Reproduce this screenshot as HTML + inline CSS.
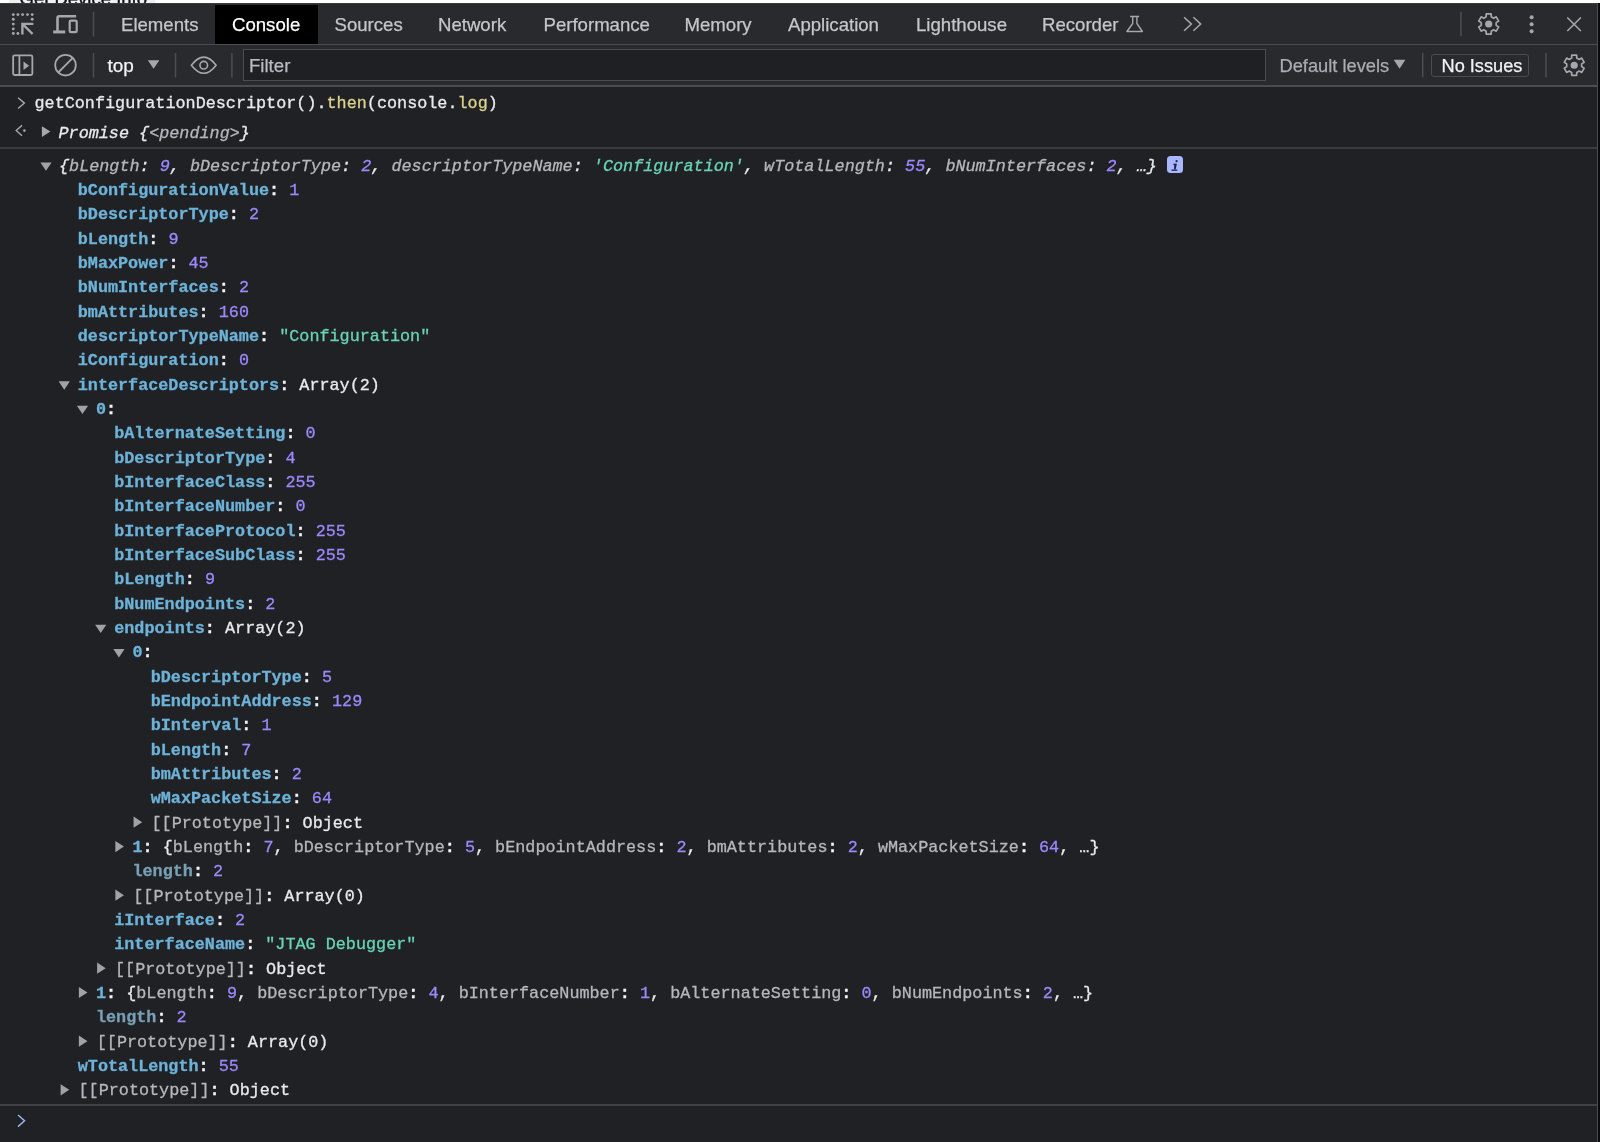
<!DOCTYPE html>
<html><head><meta charset="utf-8"><style>
html,body{margin:0;padding:0;}
body{width:1600px;height:1142px;position:relative;overflow:hidden;background:#202124;font-family:"Liberation Sans",sans-serif;}
.abs{position:absolute;}
.row{position:absolute;white-space:pre;font-family:"Liberation Mono",monospace;font-size:16.8px;line-height:20.16px;height:20.16px;-webkit-text-stroke:0.3px currentColor;}
.n{color:#6db2d8;font-weight:bold;}
.nd{color:#789fb5;font-weight:bold;}
.p{color:#e8eaed;}
.pc{color:#f4f5f6;font-weight:bold;}
.num{color:#9c88ff;}
.str{color:#68d3b7;}
.o{color:#e8eaed;}
.g{color:#b4b7bb;}
.pi{color:#e8eaed;font-style:italic;}
.gi{color:#b4b7bb;font-style:italic;}
.numi{color:#9c88ff;font-style:italic;}
.stri{color:#68d3b7;font-style:italic;}
.td{position:absolute;width:0;height:0;border-left:5.6px solid transparent;border-right:5.6px solid transparent;border-top:8.4px solid #a0a3a6;}
.tr{position:absolute;width:0;height:0;border-top:5.6px solid transparent;border-bottom:5.6px solid transparent;border-left:8.6px solid #a0a3a6;}
.tab{position:absolute;top:0;font-size:18.6px;line-height:20px;color:#c4c7ca;white-space:pre;-webkit-text-stroke:0.25px currentColor;}
</style></head><body>
<div style="position:absolute;left:0;top:0;width:1600px;height:1142px;will-change:transform">
<!-- top white strip -->
<div class="abs" style="left:0;top:0;width:1600px;height:3px;background:#fff;overflow:hidden">
  <div class="abs" style="left:9px;top:0;width:146px;height:3px;background:#efefef"></div>
  <div class="abs" style="left:19.5px;top:-9.3px;font-size:18.5px;line-height:15px;color:#111;white-space:pre;-webkit-text-stroke:0.4px #111">Get Device Info</div>
</div>
<div class="abs" style="left:0;top:3px;width:1600px;height:1.2px;background:#3a3b3e"></div>
<div class="abs" style="left:0;top:4px;width:1600px;height:40px;background:#292a2d"></div>
<div class="abs" style="left:215px;top:4.5px;width:103px;height:39px;background:#000"></div>
<div class="abs" style="left:0;top:43.8px;width:1600px;height:1.6px;background:#4a4c50"></div>
<div class="abs" style="left:0;top:45.4px;width:1600px;height:40px;background:#292a2d"></div>
<div class="abs" style="left:0;top:85px;width:1600px;height:1.6px;background:#4a4c50"></div>
<div class="abs" style="left:0;top:147.3px;width:1600px;height:1.5px;background:#3a3c40"></div>
<div class="abs" style="left:0;top:1104px;width:1600px;height:1.6px;background:#404145"></div>
<div class="abs" style="left:1596.8px;top:3px;width:1.5px;height:1139px;background:#4a4c50"></div>
<div class="abs" style="left:1598.3px;top:3px;width:1.7px;height:1139px;background:#0a0a0c"></div>
<!-- tabs -->
<div class="tab" style="left:121px;top:14.6px">Elements</div>
<div class="tab" style="left:232px;top:14.6px;color:#fff">Console</div>
<div class="tab" style="left:334.5px;top:14.6px">Sources</div>
<div class="tab" style="left:438px;top:14.6px">Network</div>
<div class="tab" style="left:543.5px;top:14.6px">Performance</div>
<div class="tab" style="left:684.5px;top:14.6px">Memory</div>
<div class="tab" style="left:788px;top:14.6px">Application</div>
<div class="tab" style="left:916px;top:14.6px">Lighthouse</div>
<div class="tab" style="left:1042px;top:14.6px">Recorder</div>
<svg class="abs" style="left:0;top:0" width="1600" height="90" viewBox="0 0 1600 90" fill="none" stroke="#a4a7ab">
  <!-- inspect -->
  <g fill="#a4a7ab" stroke="none">
<circle cx="13.3" cy="14.6" r="1.45"/><circle cx="17.9" cy="14.6" r="1.45"/><circle cx="22.6" cy="14.6" r="1.45"/><circle cx="27.5" cy="14.6" r="1.45"/><circle cx="32.2" cy="14.6" r="1.45"/><circle cx="13.3" cy="19.3" r="1.45"/><circle cx="13.3" cy="24.1" r="1.45"/><circle cx="13.3" cy="28.9" r="1.45"/><circle cx="13.3" cy="33.5" r="1.45"/><circle cx="17.9" cy="33.5" r="1.45"/><circle cx="32.2" cy="19.3" r="1.45"/>
  </g>
  <path d="M22.4 34.5V23.85H33.35M23.2 24.6L32.6 34" stroke-width="2.4"/>
  <!-- device -->
  <path d="M76.1 16.3H59.3Q57.5 16.3 57.5 18.1V31.4" stroke-width="2.6"/>
  <path d="M53.2 31.95H65.2" stroke-width="3"/>
  <rect x="69.7" y="20.6" width="7" height="11.6" rx="1.2" stroke-width="2.2"/>
  <!-- flask -->
  <path d="M1130.1 16.5H1139.1M1132.7 16.5V23.5L1126.9 31.5H1142.4L1136.9 23.5V16.5" stroke-width="1.4" stroke-linejoin="round"/>
  <!-- chevrons -->
  <path d="M1184.1 17.3L1191.4 24.1L1184.1 30.8M1193.4 17.3L1200.7 24.1L1193.4 30.8" stroke-width="1.5"/>
  <!-- gear top -->
  <g transform="translate(1488.7 24)"><path d="M-2.57 -7.15L-2.44 -10.11L2.44 -10.11L2.57 -7.15L4.91 -5.80L7.54 -7.17L9.97 -2.94L7.48 -1.35L7.48 1.35L9.97 2.94L7.54 7.17L4.91 5.80L2.57 7.15L2.44 10.11L-2.44 10.11L-2.57 7.15L-4.91 5.80L-7.54 7.17L-9.97 2.94L-7.48 1.35L-7.48 -1.35L-9.97 -2.94L-7.54 -7.17L-4.91 -5.80Z" stroke-width="1.7" stroke-linejoin="round"/><circle r="3.6" fill="#a4a7ab" stroke="none"/></g>
  <!-- dots -->
  <g fill="#a4a7ab" stroke="none"><circle cx="1531.6" cy="17.2" r="2"/><circle cx="1531.6" cy="24.2" r="2"/><circle cx="1531.6" cy="31.3" r="2"/></g>
  <!-- close -->
  <path d="M1567.3 17.5L1580.9 31M1580.9 17.5L1567.3 31" stroke-width="1.6"/>
  <!-- separators -->
  <g stroke="#4a4d51" stroke-width="1.5"><path d="M93.5 11.8V36.5M1460.9 11.8V36.3M93.5 53V77.6M175.5 53V77.5M231.9 53V77.5M1422.7 53V77.5M1546 53V77.5"/></g>
  <!-- sidebar -->
  <rect x="13.15" y="55.4" width="19.2" height="19.6" rx="1.4" stroke-width="1.8"/>
  <path d="M19.4 55.4V75" stroke-width="1.8"/>
  <path d="M23.5 61.5L29.1 65.7L23.5 69.9Z" fill="#a4a7ab" stroke="none"/>
  <!-- clear -->
  <circle cx="65.5" cy="65.2" r="10.3" stroke-width="1.8"/>
  <path d="M72.8 57.9L58.2 72.5" stroke-width="1.8"/>
  <!-- dropdown tri -->
  <path d="M147.8 60.3H159.4L153.6 68.75Z" fill="#a4a7ab" stroke="none"/>
  <!-- eye -->
  <path d="M191.4 65.2Q203.75 49 216.1 65.2Q203.75 81.4 191.4 65.2Z" stroke-width="1.6"/>
  <circle cx="203.75" cy="65.2" r="3.8" stroke-width="1.6"/>
  <!-- levels tri -->
  <path d="M1393.7 59.8H1405.4L1399.55 68.8Z" fill="#a4a7ab" stroke="none"/>
  <!-- gear 2 -->
  <g transform="translate(1574.2 65.25)"><path d="M-2.57 -7.15L-2.44 -10.11L2.44 -10.11L2.57 -7.15L4.91 -5.80L7.54 -7.17L9.97 -2.94L7.48 -1.35L7.48 1.35L9.97 2.94L7.54 7.17L4.91 5.80L2.57 7.15L2.44 10.11L-2.44 10.11L-2.57 7.15L-4.91 5.80L-7.54 7.17L-9.97 2.94L-7.48 1.35L-7.48 -1.35L-9.97 -2.94L-7.54 -7.17L-4.91 -5.80Z" stroke-width="1.7" stroke-linejoin="round"/><circle r="3.6" fill="#a4a7ab" stroke="none"/></g>
</svg>
<!-- filter box -->
<div class="abs" style="left:242.5px;top:49.4px;width:1021.5px;height:29.4px;border:1.5px solid #4a4c50;background:#1f2023"></div>
<div class="tab" style="left:249px;top:55.5px;color:#b9bcc0">Filter</div>
<div class="tab" style="left:107.5px;top:55.5px;color:#f1f3f4;font-size:19px">top</div>
<div class="tab" style="left:1279.5px;top:55.5px;color:#a9acb0;font-size:18.3px">Default levels</div>
<div class="abs" style="left:1430.5px;top:53.5px;width:96.5px;height:21px;border:1.5px solid #4a4c50;border-radius:3px"></div>
<div class="tab" style="left:1441.5px;top:55.5px;color:#f1f3f4;font-size:18.2px">No Issues</div>
<!-- console prompt rows -->
<svg class="abs" style="left:0;top:86px" width="60" height="60" viewBox="0 86 60 60" fill="none" stroke="#a4a7ab" stroke-width="1.4">
  <path d="M18.1 97.7L24.4 103.1L18.1 108.5"/>
  <path d="M22 125.4L16.2 130.5L22 135.7"/>
  <circle cx="24.4" cy="130.6" r="1.3" fill="#a4a7ab" stroke="none"/>
  <path d="M41.9 126.35L50.4 131.6L41.9 136.9Z" fill="#a4a7ab" stroke="none"/>
</svg>
<div class="row" style="left:34.5px;top:93.66999999999999px"><span class="p">getConfigurationDescriptor().</span><span style="color:#dcd38c">then</span><span class="p">(console.</span><span style="color:#dcd38c">log</span><span class="p">)</span></div>
<div class="row" style="left:58.5px;top:123.97px"><span class="pi">Promise {</span><span class="gi">&lt;pending&gt;</span><span class="pi">}</span></div>
<div class="abs" style="left:1166.5px;top:156.3px;width:16.8px;height:17px;background:#a8b7ff;border-radius:3.5px"></div>
<svg class="abs" style="left:1160px;top:150px" width="30" height="30" viewBox="1160 150 30 30"><g fill="#1c2150"><circle cx="1176.6" cy="161.2" r="1.15"/><path d="M1174.2 163.7H1176.9L1175.6 169.6H1174.1Z"/><path d="M1171.5 169.5H1177.2V170.8H1171.5Z"/><path d="M1173.4 163.7H1175.5V164.8H1173.2Z"/></g></svg>
<svg class="abs" style="left:0;top:1106px" width="40" height="36" viewBox="0 1106 40 36" fill="none" stroke="#9db2f0" stroke-width="1.5">
  <path d="M18 1115L24.5 1120.8L18 1126.6"/>
</svg>
<div class="row" style="left:59.00px;top:156.67px"><span class="pi">{</span><span class="gi">bLength</span><span class="pi">: </span><span class="numi">9</span><span class="pi">, </span><span class="gi">bDescriptorType</span><span class="pi">: </span><span class="numi">2</span><span class="pi">, </span><span class="gi">descriptorTypeName</span><span class="pi">: </span><span class="stri">&#x27;Configuration&#x27;</span><span class="pi">, </span><span class="gi">wTotalLength</span><span class="pi">: </span><span class="numi">55</span><span class="pi">, </span><span class="gi">bNumInterfaces</span><span class="pi">: </span><span class="numi">2</span><span class="pi">, …}</span></div>
<div class="row" style="left:77.74px;top:181.00px"><span class="n">bConfigurationValue</span><span class="pc">: </span><span class="num">1</span></div>
<div class="row" style="left:77.74px;top:205.33px"><span class="n">bDescriptorType</span><span class="pc">: </span><span class="num">2</span></div>
<div class="row" style="left:77.74px;top:229.66px"><span class="n">bLength</span><span class="pc">: </span><span class="num">9</span></div>
<div class="row" style="left:77.74px;top:253.99px"><span class="n">bMaxPower</span><span class="pc">: </span><span class="num">45</span></div>
<div class="row" style="left:77.74px;top:278.32px"><span class="n">bNumInterfaces</span><span class="pc">: </span><span class="num">2</span></div>
<div class="row" style="left:77.74px;top:302.65px"><span class="n">bmAttributes</span><span class="pc">: </span><span class="num">160</span></div>
<div class="row" style="left:77.74px;top:326.98px"><span class="n">descriptorTypeName</span><span class="pc">: </span><span class="str">&quot;Configuration&quot;</span></div>
<div class="row" style="left:77.74px;top:351.31px"><span class="n">iConfiguration</span><span class="pc">: </span><span class="num">0</span></div>
<div class="row" style="left:77.74px;top:375.64px"><span class="n">interfaceDescriptors</span><span class="pc">: </span><span class="o">Array(2)</span></div>
<div class="row" style="left:95.98px;top:399.97px"><span class="n">0</span><span class="pc">:</span></div>
<div class="row" style="left:114.22px;top:424.30px"><span class="n">bAlternateSetting</span><span class="pc">: </span><span class="num">0</span></div>
<div class="row" style="left:114.22px;top:448.63px"><span class="n">bDescriptorType</span><span class="pc">: </span><span class="num">4</span></div>
<div class="row" style="left:114.22px;top:472.96px"><span class="n">bInterfaceClass</span><span class="pc">: </span><span class="num">255</span></div>
<div class="row" style="left:114.22px;top:497.29px"><span class="n">bInterfaceNumber</span><span class="pc">: </span><span class="num">0</span></div>
<div class="row" style="left:114.22px;top:521.62px"><span class="n">bInterfaceProtocol</span><span class="pc">: </span><span class="num">255</span></div>
<div class="row" style="left:114.22px;top:545.95px"><span class="n">bInterfaceSubClass</span><span class="pc">: </span><span class="num">255</span></div>
<div class="row" style="left:114.22px;top:570.28px"><span class="n">bLength</span><span class="pc">: </span><span class="num">9</span></div>
<div class="row" style="left:114.22px;top:594.61px"><span class="n">bNumEndpoints</span><span class="pc">: </span><span class="num">2</span></div>
<div class="row" style="left:114.22px;top:618.94px"><span class="n">endpoints</span><span class="pc">: </span><span class="o">Array(2)</span></div>
<div class="row" style="left:132.46px;top:643.27px"><span class="n">0</span><span class="pc">:</span></div>
<div class="row" style="left:150.70px;top:667.60px"><span class="n">bDescriptorType</span><span class="pc">: </span><span class="num">5</span></div>
<div class="row" style="left:150.70px;top:691.93px"><span class="n">bEndpointAddress</span><span class="pc">: </span><span class="num">129</span></div>
<div class="row" style="left:150.70px;top:716.26px"><span class="n">bInterval</span><span class="pc">: </span><span class="num">1</span></div>
<div class="row" style="left:150.70px;top:740.59px"><span class="n">bLength</span><span class="pc">: </span><span class="num">7</span></div>
<div class="row" style="left:150.70px;top:764.92px"><span class="n">bmAttributes</span><span class="pc">: </span><span class="num">2</span></div>
<div class="row" style="left:150.70px;top:789.25px"><span class="n">wMaxPacketSize</span><span class="pc">: </span><span class="num">64</span></div>
<div class="row" style="left:151.50px;top:813.58px"><span class="g">[[Prototype]]</span><span class="pc">: </span><span class="o">Object</span></div>
<div class="row" style="left:132.46px;top:837.91px"><span class="n">1</span><span class="pc">: </span><span class="p">{</span><span class="g">bLength</span><span class="pc">: </span><span class="num">7</span><span class="p">, </span><span class="g">bDescriptorType</span><span class="pc">: </span><span class="num">5</span><span class="p">, </span><span class="g">bEndpointAddress</span><span class="pc">: </span><span class="num">2</span><span class="p">, </span><span class="g">bmAttributes</span><span class="pc">: </span><span class="num">2</span><span class="p">, </span><span class="g">wMaxPacketSize</span><span class="pc">: </span><span class="num">64</span><span class="p">, …}</span></div>
<div class="row" style="left:132.46px;top:862.24px"><span class="nd">length</span><span class="pc">: </span><span class="num">2</span></div>
<div class="row" style="left:133.26px;top:886.57px"><span class="g">[[Prototype]]</span><span class="pc">: </span><span class="o">Array(0)</span></div>
<div class="row" style="left:114.22px;top:910.90px"><span class="n">iInterface</span><span class="pc">: </span><span class="num">2</span></div>
<div class="row" style="left:114.22px;top:935.23px"><span class="n">interfaceName</span><span class="pc">: </span><span class="str">&quot;JTAG Debugger&quot;</span></div>
<div class="row" style="left:115.02px;top:959.56px"><span class="g">[[Prototype]]</span><span class="pc">: </span><span class="o">Object</span></div>
<div class="row" style="left:95.98px;top:983.89px"><span class="n">1</span><span class="pc">: </span><span class="p">{</span><span class="g">bLength</span><span class="pc">: </span><span class="num">9</span><span class="p">, </span><span class="g">bDescriptorType</span><span class="pc">: </span><span class="num">4</span><span class="p">, </span><span class="g">bInterfaceNumber</span><span class="pc">: </span><span class="num">1</span><span class="p">, </span><span class="g">bAlternateSetting</span><span class="pc">: </span><span class="num">0</span><span class="p">, </span><span class="g">bNumEndpoints</span><span class="pc">: </span><span class="num">2</span><span class="p">, …}</span></div>
<div class="row" style="left:95.98px;top:1008.22px"><span class="nd">length</span><span class="pc">: </span><span class="num">2</span></div>
<div class="row" style="left:96.78px;top:1032.55px"><span class="g">[[Prototype]]</span><span class="pc">: </span><span class="o">Array(0)</span></div>
<div class="row" style="left:77.74px;top:1056.88px"><span class="n">wTotalLength</span><span class="pc">: </span><span class="num">55</span></div>
<div class="row" style="left:78.54px;top:1081.21px"><span class="g">[[Prototype]]</span><span class="pc">: </span><span class="o">Object</span></div>
<svg class="abs" style="left:0;top:0" width="1600" height="1142"><path fill="#a0a3a6" d="M40.40 162.40H51.60L46.00 170.80ZM58.64 381.37H69.84L64.24 389.77ZM76.88 405.70H88.08L82.48 414.10ZM95.12 624.67H106.32L100.72 633.07ZM113.36 649.00H124.56L118.96 657.40ZM133.60 816.61L142.20 822.21L133.60 827.81ZM115.36 840.94L123.96 846.54L115.36 852.14ZM115.36 889.60L123.96 895.20L115.36 900.80ZM97.12 962.59L105.72 968.19L97.12 973.79ZM78.88 986.92L87.48 992.52L78.88 998.12ZM78.88 1035.58L87.48 1041.18L78.88 1046.78ZM60.64 1084.24L69.24 1089.84L60.64 1095.44Z"/></svg>
</div>
</body></html>
